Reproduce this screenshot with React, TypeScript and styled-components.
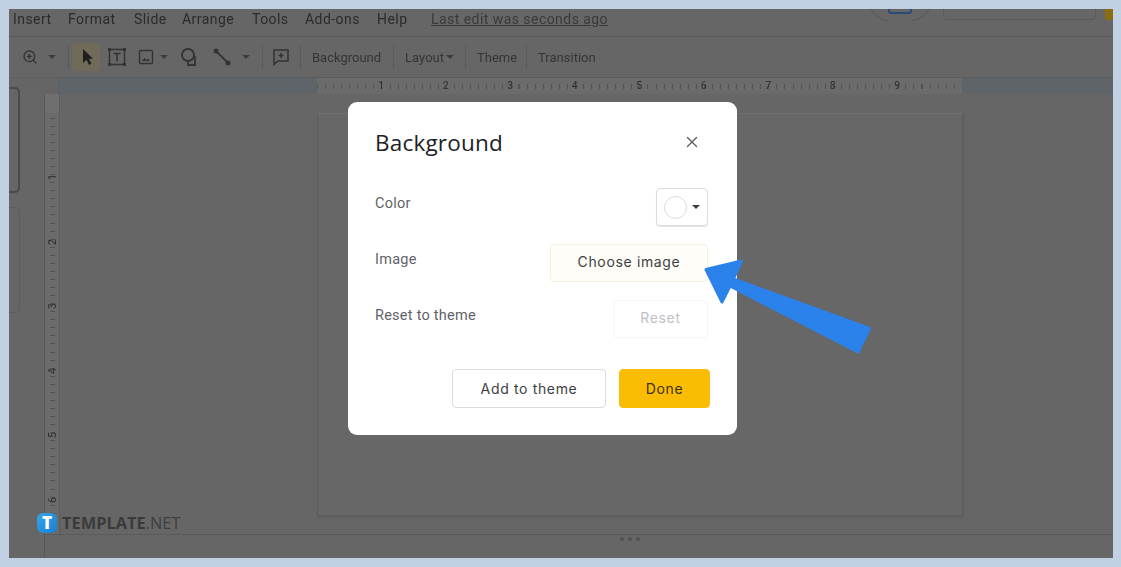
import React from 'react';
import styled, { createGlobalStyle } from 'styled-components';
import { ZoomIn, X } from 'lucide-react';

const GlobalStyle = createGlobalStyle`
  html, body {
    margin: 0;
    padding: 0;
    background: #c1d0e3;
  }
`;

const Frame = styled.div`
  width: 1121px;
  height: 567px;
  box-sizing: border-box;
  padding: 9px 8px 9px 9px;
  overflow: hidden;
`;

const Screen = styled.div`
  position: relative;
  height: 100%;
  background: #666;
  overflow: hidden;
  font-family: Roboto, "Liberation Sans", sans-serif;
`;

const Backdrop = styled.div`
  display: flex;
  flex-direction: column;
  height: 100%;
  filter: blur(0.5px);
`;

const MenuBar = styled.div`
  display: flex;
  align-items: flex-start;
  height: 28px;
  box-sizing: border-box;
  padding-left: 4px;
  border-bottom: 1px solid #595959;
  color: #2b2b2b;
  font-size: 14px;
  letter-spacing: 0.45px;
`;

const MenuItem = styled.span<{ $w: number }>`
  width: ${p => p.$w}px;
  line-height: 21px;
`;

const LastEdit = styled.span`
  line-height: 20px;
  color: #3a3a3a;
  text-decoration: underline;
`;

const AccountArea = styled.div`
  display: flex;
  align-items: flex-start;
  margin-left: auto;
  height: 12px;
  overflow: hidden;
`;

const Avatar = styled.div`
  position: relative;
  width: 58px;
  height: 32px;
  margin: -20px 13px 0 0;
  border: 1px solid #5a5a5a;
  border-radius: 50%;
  display: flex;
  justify-content: center;
`;

const AvatarBar = styled.div`
  width: 24px;
  height: 24px;
  border: 2px solid #2b4a77;
  border-radius: 3px;
  box-sizing: border-box;
`;

const ShareBox = styled.div`
  width: 153px;
  height: 20px;
  margin: -9px 9px 0 0;
  border: 1px solid #5b5b5b;
  border-radius: 4px;
  box-sizing: border-box;
`;

const YellowTab = styled.div`
  width: 8px;
  height: 11px;
  background: #8a6d10;
  border-radius: 0 0 0 3px;
`;

const Toolbar = styled.div`
  display: flex;
  align-items: center;
  height: 41px;
  box-sizing: border-box;
  padding-left: 12px;
  border-bottom: 1px solid #5c5c5c;
  color: #333;
`;

const ToolSlot = styled.div<{ $w: number; $active?: boolean }>`
  display: flex;
  align-items: center;
  justify-content: center;
  width: ${p => p.$w}px;
  height: 28px;
  flex-shrink: 0;
  border-radius: 3px;
  background: ${p => (p.$active ? '#6f6b58' : 'transparent')};
`;

const Caret = styled.span`
  width: 0;
  height: 0;
  border-left: 4px solid transparent;
  border-right: 4px solid transparent;
  border-top: 4px solid #3d3d3d;
`;

const ToolDivider = styled.span<{ $l?: number; $r?: number }>`
  width: 1px;
  height: 24px;
  margin: 0 ${p => p.$r ?? 11}px 0 ${p => p.$l ?? 11}px;
  flex-shrink: 0;
  background: #5a5a5a;
`;

const ToolText = styled.span`
  display: flex;
  align-items: center;
  gap: 2px;
  font-size: 13px;
  color: #353535;
`;

const RulerRow = styled.div`
  display: flex;
  height: 16px;
  flex-shrink: 0;
`;

const RulerBlank = styled.div`
  width: 50px;
  background: #656565;
  border-right: 1px solid #5d5d5d;
  box-sizing: border-box;
`;

const RulerBand = styled.div<{ $w?: number }>`
  ${p => (p.$w ? `width: ${p.$w}px;` : 'flex: 1;')}
  background: #5f6468;
`;

const HTrack = styled.div`
  display: flex;
  width: 645px;
  box-sizing: border-box;
  padding-left: 32px;
  overflow: hidden;
  background:
    repeating-linear-gradient(90deg, #525252 0 1px, transparent 1px 8.06px) 0 center / 100% 5px no-repeat,
    #6b6b6b;
`;

const HCell = styled.span`
  flex: 0 0 64.5px;
  text-align: center;
  font-size: 10.5px;
  line-height: 16px;
  color: #2c2c2c;
`;

const Workspace = styled.div`
  display: flex;
  flex: 1;
  min-height: 0;
`;

const Filmstrip = styled.div`
  display: flex;
  flex-direction: column;
  gap: 14px;
  width: 36px;
  box-sizing: border-box;
  border-right: 1px solid #585858;
  flex-shrink: 0;
`;

const Thumb = styled.div<{ $selected?: boolean }>`
  width: 11px;
  height: 106px;
  margin-top: ${p => (p.$selected ? -7 : 0)}px;
  box-sizing: border-box;
  border: ${p => (p.$selected ? '2px solid #4a4a4a' : '1px solid #5c5c5c')};
  border-left: none;
  border-radius: 0 5px 5px 0;
`;

const Main = styled.div`
  display: flex;
  flex-direction: column;
  flex: 1;
  min-width: 0;
`;

const Stage = styled.div`
  display: flex;
  flex: 1;
  min-height: 0;
`;

const VRuler = styled.div`
  width: 15px;
  box-sizing: border-box;
  padding-top: 51px;
  flex-shrink: 0;
  border-right: 1px solid #5c5c5c;
  overflow: hidden;
  background:
    linear-gradient(#6f6f6f, #6f6f6f) 0 0 / 100% 19px no-repeat,
    repeating-linear-gradient(0deg, #525252 0 1px, transparent 1px 8.06px) center 20px / 5px 100% no-repeat,
    #6b6b6b;
`;

const VCell = styled.div`
  display: flex;
  align-items: center;
  justify-content: center;
  height: 64.5px;
  font-size: 10.5px;
  color: #2c2c2c;

  span {
    writing-mode: vertical-rl;
    transform: rotate(180deg);
  }
`;

const Canvas = styled.div`
  flex: 1;
  padding: 19px 0 0 257px;
`;

const Slide = styled.div`
  width: 646px;
  height: 403px;
  box-sizing: border-box;
  border: 1px solid #5c5c5c;
  border-top-color: #707070;
  box-shadow: 1px 2px 1px #5f5f5f;
  background: #676767;
`;

const Notes = styled.div`
  display: flex;
  justify-content: center;
  gap: 4px;
  height: 24px;
  box-sizing: border-box;
  padding: 2px 0 0 102px;
  border-top: 1px solid #5a5a5a;
  flex-shrink: 0;
`;

const Dot = styled.span`
  width: 4px;
  height: 4px;
  border-radius: 50%;
  background: #525252;
`;

const Modal = styled.div`
  position: absolute;
  left: 339px;
  top: 93px;
  width: 389px;
  height: 333px;
  box-sizing: border-box;
  padding: 24px 27px 0;
  background: #fff;
  border-radius: 9px;
  color: #202124;
`;

const ModalHeader = styled.div`
  display: flex;
  align-items: center;
  justify-content: space-between;
  height: 32px;
  padding-right: 9px;
  color: #5f6368;
`;

const ModalTitle = styled.h2`
  margin: 0;
  font: 400 22.5px "Open Sans", sans-serif;
  letter-spacing: 0.2px;
  color: #202124;
`;

const Rows = styled.div`
  display: flex;
  flex-direction: column;
  gap: 18px;
  margin-top: 30px;
  padding-right: 2px;
`;

const Row = styled.div`
  display: flex;
  align-items: flex-start;
  justify-content: space-between;
  height: 38px;
`;

const RowLabel = styled.span`
  font-size: 14.5px;
  letter-spacing: 0.25px;
  line-height: 32px;
  color: #5f6368;
`;

const SwatchButton = styled.div`
  display: flex;
  align-items: center;
  gap: 5px;
  box-sizing: border-box;
  width: 52px;
  height: 38px;
  padding-left: 7px;
  border: 1px solid #dadce0;
  border-radius: 4px;
  box-shadow: 0 1px 1px #e4e4e4;
`;

const Swatch = styled.span`
  width: 23px;
  height: 23px;
  box-sizing: border-box;
  border: 1px solid #dadce0;
  border-radius: 50%;
`;

const Button = styled.button<{ $w: number; $variant?: 'hover' | 'disabled' | 'primary' }>`
  width: ${p => p.$w}px;
  height: ${p => (p.$variant === 'hover' || p.$variant === 'disabled' ? 38 : 39)}px;
  padding: 0 0 ${p => (p.$variant === 'hover' || p.$variant === 'disabled' ? 3 : 1)}px;
  border-radius: 4px;
  font: 400 14px Inter, "Open Sans", sans-serif;
  letter-spacing: 0.65px;
  cursor: pointer;
  border: 1px solid
    ${p =>
      p.$variant === 'hover' ? '#f6f0e0'
      : p.$variant === 'disabled' ? '#f6f6f6'
      : p.$variant === 'primary' ? '#fbbc04'
      : '#dadce0'};
  background: ${p =>
    p.$variant === 'hover' ? '#fffdf7' : p.$variant === 'primary' ? '#fbbc04' : '#fff'};
  color: ${p => (p.$variant === 'disabled' ? '#bdc1c6' : p.$variant === 'primary' ? '#3c3000' : '#3c4043')};
`;

const Footer = styled.div`
  display: flex;
  justify-content: flex-end;
  gap: 13px;
  margin-top: 31px;
`;

const ArrowOverlay = styled.svg`
  position: absolute;
  left: 0;
  top: 0;
  width: 100%;
  height: 100%;
  pointer-events: none;
`;

const Watermark = styled.div`
  position: absolute;
  left: 28px;
  top: 502px;
  display: flex;
  align-items: center;
  gap: 5px;
  font: 700 16.4px "Open Sans", sans-serif;
  color: #3a3a3a;

  span {
    font-weight: 400;
    color: #3f3f3f;
  }
`;

const LogoMark = styled.div`
  display: flex;
  align-items: center;
  justify-content: center;
  width: 20px;
  height: 20px;
  border-radius: 6px;
  background: linear-gradient(135deg, #35a5ee, #1b7fd0);
  color: #fff;
  font-size: 17px;
  font-weight: 800;
`;

const CursorSvg = styled.svg`
  margin-left: 4px;
`;

const menu: [string, number][] = [
  ['Insert', 55],
  ['Format', 66],
  ['Slide', 48],
  ['Arrange', 70],
  ['Tools', 53],
  ['Add-ons', 72],
  ['Help', 54],
];

const inches = [1, 2, 3, 4, 5, 6, 7, 8, 9];

const TextBoxIcon = () => (
  <svg width="20" height="20" viewBox="0 0 20 20" fill="none" stroke="#333" strokeWidth="1.5">
    <rect x="2.5" y="2.5" width="15" height="15" />
    <path d="M6.5 6.5h7M10 6.5v8" />
    <g fill="#333" stroke="none">
      <rect x="1" y="1" width="3" height="3" />
      <rect x="16" y="1" width="3" height="3" />
      <rect x="1" y="16" width="3" height="3" />
      <rect x="16" y="16" width="3" height="3" />
    </g>
  </svg>
);

const ImageIcon = () => (
  <svg width="16" height="16" viewBox="0 0 16 16" fill="none" stroke="#333" strokeWidth="1.4">
    <rect x="1.5" y="1.5" width="13" height="13" rx="1" />
    <path d="M4 12l2.5-3 2 2 1.5-1.5L12 12z" fill="#333" stroke="none" />
  </svg>
);

const ShapeIcon = () => (
  <svg width="20" height="20" viewBox="0 0 20 20" fill="none" stroke="#333" strokeWidth="1.8">
    <circle cx="8" cy="8" r="6" />
    <path d="M15 9v9H8v-3" />
  </svg>
);

const LineIcon = () => (
  <svg width="18" height="18" viewBox="0 0 18 18" fill="none" stroke="#333" strokeWidth="1.8">
    <path d="M3 3l12 12" />
    <circle cx="3" cy="3" r="1.6" fill="#333" />
    <circle cx="15" cy="15" r="1.6" fill="#333" />
  </svg>
);

const CursorIcon = () => (
  <CursorSvg width="14" height="18" viewBox="0 0 14 18">
    <path d="M2 1v14l3.5-3.2 2.6 5.2 2.4-1.2-2.6-5H12z" fill="#1e1e1e" />
  </CursorSvg>
);

const CommentIcon = () => (
  <svg width="18" height="18" viewBox="0 0 18 18" fill="none" stroke="#333" strokeWidth="1.5">
    <path d="M2 2h14v11H6l-4 3.5z" />
    <path d="M9 5v5M6.5 7.5h5" />
  </svg>
);

const App: React.FC = () => {
  return (
    <>
      <GlobalStyle />
      <Frame>
        <Screen>
          <Backdrop>
            <MenuBar>
              {menu.map(([label, w]) => (
                <MenuItem key={label} $w={w}>{label}</MenuItem>
              ))}
              <LastEdit>Last edit was seconds ago</LastEdit>
              <AccountArea>
                <Avatar>
                  <AvatarBar />
                </Avatar>
                <ShareBox />
                <YellowTab />
              </AccountArea>
            </MenuBar>

            <Toolbar>
              <ToolSlot $w={18}><ZoomIn size={16} color="#333" /></ToolSlot>
              <ToolSlot $w={26}><Caret /></ToolSlot>
              <ToolDivider $l={3} $r={3} />
              <ToolSlot $w={28} $active><CursorIcon /></ToolSlot>
              <ToolSlot $w={34}><TextBoxIcon /></ToolSlot>
              <ToolSlot $w={24}><ImageIcon /></ToolSlot>
              <ToolSlot $w={12}><Caret /></ToolSlot>
              <ToolSlot $w={40}><ShapeIcon /></ToolSlot>
              <ToolSlot $w={24}><LineIcon /></ToolSlot>
              <ToolSlot $w={24}><Caret /></ToolSlot>
              <ToolDivider $l={4} $r={6} />
              <ToolSlot $w={24}><CommentIcon /></ToolSlot>
              <ToolDivider $l={7} $r={11} />
              <ToolText>Background</ToolText>
              <ToolDivider $l={12} />
              <ToolText>Layout<Caret /></ToolText>
              <ToolDivider />
              <ToolText>Theme</ToolText>
              <ToolDivider $l={9} />
              <ToolText>Transition</ToolText>
            </Toolbar>

            <RulerRow>
              <RulerBlank />
              <RulerBand $w={258} />
              <HTrack>
                {inches.map(n => <HCell key={n}>{n}</HCell>)}
              </HTrack>
              <RulerBand />
            </RulerRow>

            <Workspace>
              <Filmstrip>
                <Thumb $selected />
                <Thumb />
              </Filmstrip>
              <Main>
                <Stage>
                  <VRuler>
                    {inches.slice(0, 6).map(n => (
                      <VCell key={n}><span>{n}</span></VCell>
                    ))}
                  </VRuler>
                  <Canvas>
                    <Slide />
                  </Canvas>
                </Stage>
                <Notes>
                  <Dot />
                  <Dot />
                  <Dot />
                </Notes>
              </Main>
            </Workspace>
          </Backdrop>

          <Modal>
            <ModalHeader>
              <ModalTitle>Background</ModalTitle>
              <X size={18} strokeWidth={1.8} />
            </ModalHeader>
            <Rows>
              <Row>
                <RowLabel>Color</RowLabel>
                <SwatchButton>
                  <Swatch />
                  <Caret />
                </SwatchButton>
              </Row>
              <Row>
                <RowLabel>Image</RowLabel>
                <Button $w={158} $variant="hover">Choose image</Button>
              </Row>
              <Row>
                <RowLabel>Reset to theme</RowLabel>
                <Button $w={95} $variant="disabled">Reset</Button>
              </Row>
            </Rows>
            <Footer>
              <Button $w={154}>Add to theme</Button>
              <Button $w={91} $variant="primary">Done</Button>
            </Footer>
          </Modal>

          <ArrowOverlay viewBox="0 0 1104 549">
            <path
              d="M697 260.5 L732.5 252 L724.5 270 L860.5 319.5 L849 343 L721 277 L713 293 Z"
              fill="#2a82ea"
              stroke="#2a82ea"
              strokeWidth="3"
              strokeLinejoin="round"
            />
          </ArrowOverlay>

          <Watermark>
            <LogoMark>T</LogoMark>
            <div>TEMPLATE<span>.NET</span></div>
          </Watermark>
        </Screen>
      </Frame>
    </>
  );
};

export default App;
